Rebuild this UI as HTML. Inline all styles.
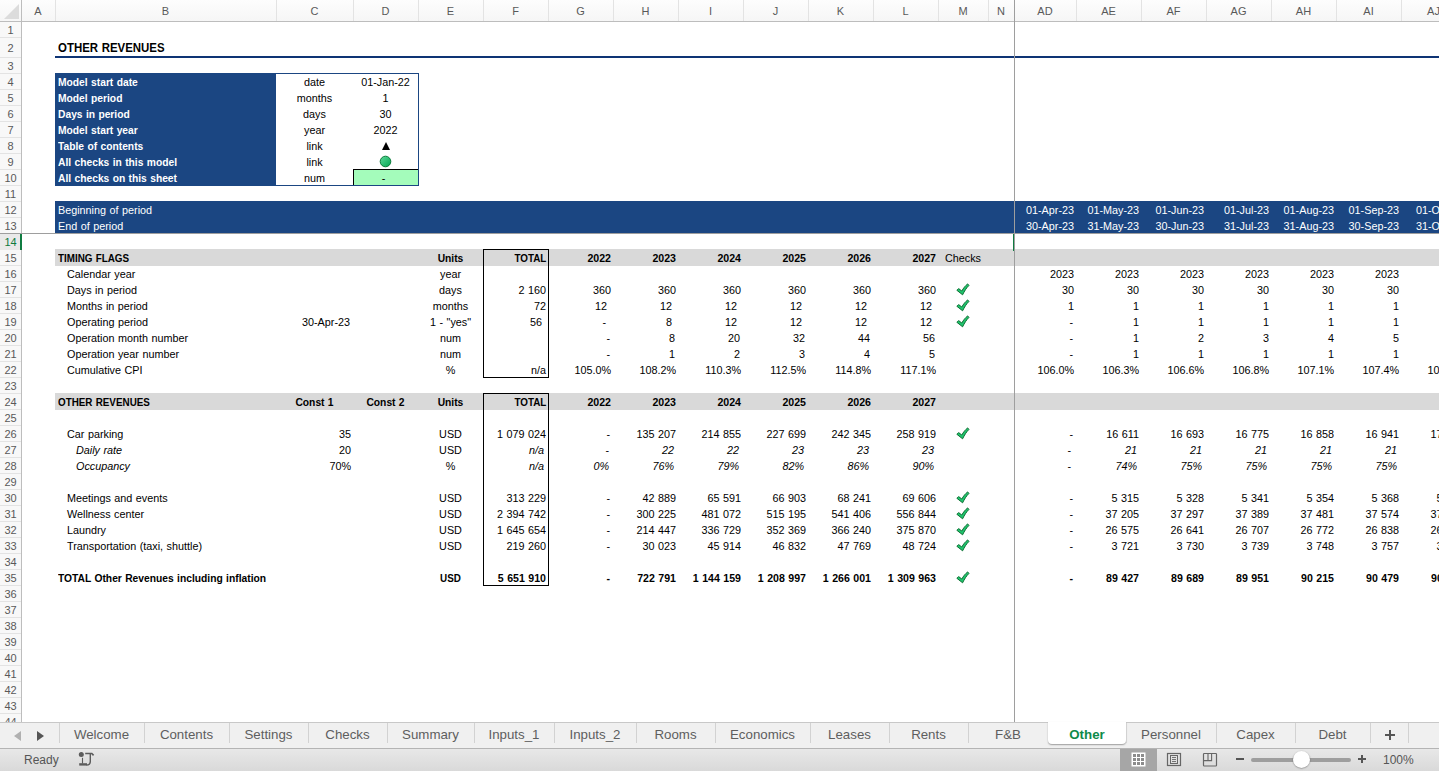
<!DOCTYPE html>
<html><head><meta charset="utf-8"><style>
html,body{margin:0;padding:0;width:1439px;height:771px;overflow:hidden;background:#fff;font-family:"Liberation Sans",sans-serif;}
#sheet{position:absolute;left:0;top:0;width:1439px;height:722px;overflow:hidden;}
.r{position:absolute;box-sizing:border-box;}
svg.r{box-sizing:content-box;}
.t{position:absolute;white-space:pre;word-spacing:0.5px;}
.h{position:absolute;text-align:center;font-size:11px;color:#595959;}
.tab{position:absolute;top:722px;height:25px;line-height:25px;text-align:center;font-size:13.3px;color:#5e5e5e;}
</style></head><body>
<div id="sheet">
<div class="r" style="left:55px;top:56px;width:1384px;height:2px;background:#0e3474;"></div>
<div class="r" style="left:55px;top:73px;width:221px;height:113px;background:#1b4682;"></div>
<div class="r" style="left:276px;top:73px;width:143px;height:113px;border-right:1px solid #1b4682;border-bottom:1px solid #1b4682;border-top:1px solid #1b4682;"></div>
<div class="r" style="left:353px;top:169px;width:65px;height:16px;background:#a4fcbb;border-top:1px solid #000;border-left:1px solid #000;"></div>
<div class="r" style="left:55px;top:201px;width:959px;height:32px;background:#1b4682;"></div>
<div class="r" style="left:1015px;top:201px;width:424px;height:32px;background:#1b4682;"></div>
<div class="r" style="left:55px;top:249px;width:959px;height:17px;background:#d9d9d9;"></div>
<div class="r" style="left:1015px;top:249px;width:424px;height:17px;background:#d9d9d9;"></div>
<div class="r" style="left:55px;top:393px;width:959px;height:17px;background:#d9d9d9;"></div>
<div class="r" style="left:1015px;top:393px;width:424px;height:17px;background:#d9d9d9;"></div>
<div class="r" style="left:483px;top:249px;width:66px;height:129px;border:1px solid #000;"></div>
<div class="r" style="left:483px;top:393px;width:66px;height:193px;border:1px solid #000;"></div>
<div class="t" style="top:75px;height:16px;line-height:15px;font-size:10.6px;color:#fff;font-weight:bold;left:58px;transform:scaleX(0.97);transform-origin:0 50%;">Model start date</div>
<div class="t" style="top:75px;height:16px;line-height:15px;font-size:10.8px;color:#000;left:276px;width:77px;text-align:center;">date</div>
<div class="t" style="top:75px;height:16px;line-height:15px;font-size:10.8px;color:#000;left:353px;width:65px;text-align:center;">01-Jan-22</div>
<div class="t" style="top:91px;height:16px;line-height:15px;font-size:10.6px;color:#fff;font-weight:bold;left:58px;transform:scaleX(0.97);transform-origin:0 50%;">Model period</div>
<div class="t" style="top:91px;height:16px;line-height:15px;font-size:10.8px;color:#000;left:276px;width:77px;text-align:center;">months</div>
<div class="t" style="top:91px;height:16px;line-height:15px;font-size:10.8px;color:#000;left:353px;width:65px;text-align:center;">1</div>
<div class="t" style="top:107px;height:16px;line-height:15px;font-size:10.6px;color:#fff;font-weight:bold;left:58px;transform:scaleX(0.97);transform-origin:0 50%;">Days in period</div>
<div class="t" style="top:107px;height:16px;line-height:15px;font-size:10.8px;color:#000;left:276px;width:77px;text-align:center;">days</div>
<div class="t" style="top:107px;height:16px;line-height:15px;font-size:10.8px;color:#000;left:353px;width:65px;text-align:center;">30</div>
<div class="t" style="top:123px;height:16px;line-height:15px;font-size:10.6px;color:#fff;font-weight:bold;left:58px;transform:scaleX(0.97);transform-origin:0 50%;">Model start year</div>
<div class="t" style="top:123px;height:16px;line-height:15px;font-size:10.8px;color:#000;left:276px;width:77px;text-align:center;">year</div>
<div class="t" style="top:123px;height:16px;line-height:15px;font-size:10.8px;color:#000;left:353px;width:65px;text-align:center;">2022</div>
<div class="t" style="top:139px;height:16px;line-height:15px;font-size:10.6px;color:#fff;font-weight:bold;left:58px;transform:scaleX(0.97);transform-origin:0 50%;">Table of contents</div>
<div class="t" style="top:139px;height:16px;line-height:15px;font-size:10.8px;color:#000;left:276px;width:77px;text-align:center;">link</div>
<div class="t" style="top:155px;height:16px;line-height:15px;font-size:10.6px;color:#fff;font-weight:bold;left:58px;transform:scaleX(0.97);transform-origin:0 50%;">All checks in this model</div>
<div class="t" style="top:155px;height:16px;line-height:15px;font-size:10.8px;color:#000;left:276px;width:77px;text-align:center;">link</div>
<div class="t" style="top:171px;height:16px;line-height:15px;font-size:10.6px;color:#fff;font-weight:bold;left:58px;transform:scaleX(0.97);transform-origin:0 50%;">All checks on this sheet</div>
<div class="t" style="top:171px;height:16px;line-height:15px;font-size:10.8px;color:#000;left:276px;width:77px;text-align:center;">num</div>
<div class="t" style="top:171px;height:16px;line-height:15px;font-size:10.8px;color:#000;left:353px;width:65px;text-align:center;margin-left:-2px;">-</div>
<svg class="r" style="left:381px;top:141px" width="10" height="10"><polygon points="1,9 9,9 5,1" fill="#000"/></svg>
<svg class="r" style="left:379px;top:155px" width="13" height="13"><defs><linearGradient id="gc" x1="0" y1="0" x2="1" y2="1"><stop offset="0" stop-color="#5fd99a"/><stop offset="1" stop-color="#00a651"/></linearGradient></defs><circle cx="6.5" cy="6.5" r="5.3" fill="url(#gc)" stroke="#0b7a3a" stroke-width="1"/></svg>
<div class="t" style="top:39px;height:20px;line-height:19px;font-size:10.8px;color:#000;left:24px;"></div>
<div class="t" style="left:58px;top:39px;height:19px;line-height:19px;font-size:12.5px;font-weight:bold;transform:scaleX(0.915);transform-origin:0 50%;">OTHER REVENUES</div>
<div class="t" style="top:203px;height:16px;line-height:15px;font-size:10.8px;color:#fff;left:58px;">Beginning of period</div>
<div class="t" style="top:219px;height:16px;line-height:15px;font-size:10.8px;color:#fff;left:58px;">End of period</div>
<div class="t" style="top:203px;height:16px;line-height:15px;font-size:10.8px;color:#fff;right:365px;text-align:right;">01-Apr-23</div>
<div class="t" style="top:219px;height:16px;line-height:15px;font-size:10.8px;color:#fff;right:365px;text-align:right;">30-Apr-23</div>
<div class="t" style="top:203px;height:16px;line-height:15px;font-size:10.8px;color:#fff;right:300px;text-align:right;">01-May-23</div>
<div class="t" style="top:219px;height:16px;line-height:15px;font-size:10.8px;color:#fff;right:300px;text-align:right;">31-May-23</div>
<div class="t" style="top:203px;height:16px;line-height:15px;font-size:10.8px;color:#fff;right:235px;text-align:right;">01-Jun-23</div>
<div class="t" style="top:219px;height:16px;line-height:15px;font-size:10.8px;color:#fff;right:235px;text-align:right;">30-Jun-23</div>
<div class="t" style="top:203px;height:16px;line-height:15px;font-size:10.8px;color:#fff;right:170px;text-align:right;">01-Jul-23</div>
<div class="t" style="top:219px;height:16px;line-height:15px;font-size:10.8px;color:#fff;right:170px;text-align:right;">31-Jul-23</div>
<div class="t" style="top:203px;height:16px;line-height:15px;font-size:10.8px;color:#fff;right:105px;text-align:right;">01-Aug-23</div>
<div class="t" style="top:219px;height:16px;line-height:15px;font-size:10.8px;color:#fff;right:105px;text-align:right;">31-Aug-23</div>
<div class="t" style="top:203px;height:16px;line-height:15px;font-size:10.8px;color:#fff;right:40px;text-align:right;">01-Sep-23</div>
<div class="t" style="top:219px;height:16px;line-height:15px;font-size:10.8px;color:#fff;right:40px;text-align:right;">30-Sep-23</div>
<div class="t" style="top:203px;height:16px;line-height:15px;font-size:10.8px;color:#fff;right:-25px;text-align:right;">01-Oct-23</div>
<div class="t" style="top:219px;height:16px;line-height:15px;font-size:10.8px;color:#fff;right:-25px;text-align:right;">31-Oct-23</div>
<div class="t" style="top:251px;height:16px;line-height:15px;font-size:10.6px;color:#000;font-weight:bold;left:58px;transform:scaleX(0.93);transform-origin:0 50%;">TIMING FLAGS</div>
<div class="t" style="top:251px;height:16px;line-height:15px;font-size:10.6px;color:#000;font-weight:bold;left:418px;width:65px;text-align:center;transform:scaleX(0.97);transform-origin:50% 50%;">Units</div>
<div class="t" style="top:251px;height:16px;line-height:15px;font-size:10.6px;color:#000;font-weight:bold;right:893px;text-align:right;transform:scaleX(0.93);transform-origin:100% 50%;">TOTAL</div>
<div class="t" style="top:251px;height:16px;line-height:15px;font-size:10.6px;color:#000;font-weight:bold;right:828px;text-align:right;">2022</div>
<div class="t" style="top:251px;height:16px;line-height:15px;font-size:10.6px;color:#000;font-weight:bold;right:763px;text-align:right;">2023</div>
<div class="t" style="top:251px;height:16px;line-height:15px;font-size:10.6px;color:#000;font-weight:bold;right:698px;text-align:right;">2024</div>
<div class="t" style="top:251px;height:16px;line-height:15px;font-size:10.6px;color:#000;font-weight:bold;right:633px;text-align:right;">2025</div>
<div class="t" style="top:251px;height:16px;line-height:15px;font-size:10.6px;color:#000;font-weight:bold;right:568px;text-align:right;">2026</div>
<div class="t" style="top:251px;height:16px;line-height:15px;font-size:10.6px;color:#000;font-weight:bold;right:503px;text-align:right;">2027</div>
<div class="t" style="top:251px;height:16px;line-height:15px;font-size:10.8px;color:#000;left:938px;width:50px;text-align:center;">Checks</div>
<div class="t" style="top:267px;height:16px;line-height:15px;font-size:10.8px;color:#000;left:67px;">Calendar year</div>
<div class="t" style="top:267px;height:16px;line-height:15px;font-size:10.8px;color:#000;left:418px;width:65px;text-align:center;">year</div>
<div class="t" style="top:267px;height:16px;line-height:15px;font-size:10.8px;color:#000;right:365px;text-align:right;">2023</div>
<div class="t" style="top:267px;height:16px;line-height:15px;font-size:10.8px;color:#000;right:300px;text-align:right;">2023</div>
<div class="t" style="top:267px;height:16px;line-height:15px;font-size:10.8px;color:#000;right:235px;text-align:right;">2023</div>
<div class="t" style="top:267px;height:16px;line-height:15px;font-size:10.8px;color:#000;right:170px;text-align:right;">2023</div>
<div class="t" style="top:267px;height:16px;line-height:15px;font-size:10.8px;color:#000;right:105px;text-align:right;">2023</div>
<div class="t" style="top:267px;height:16px;line-height:15px;font-size:10.8px;color:#000;right:40px;text-align:right;">2023</div>
<div class="t" style="top:267px;height:16px;line-height:15px;font-size:10.8px;color:#000;right:-25px;text-align:right;">2023</div>
<div class="t" style="top:283px;height:16px;line-height:15px;font-size:10.8px;color:#000;left:67px;">Days in period</div>
<div class="t" style="top:283px;height:16px;line-height:15px;font-size:10.8px;color:#000;left:418px;width:65px;text-align:center;">days</div>
<div class="t" style="top:283px;height:16px;line-height:15px;font-size:10.8px;color:#000;right:893px;text-align:right;">2 160</div>
<div class="t" style="top:283px;height:16px;line-height:15px;font-size:10.8px;color:#000;right:828px;text-align:right;">360</div>
<div class="t" style="top:283px;height:16px;line-height:15px;font-size:10.8px;color:#000;right:763px;text-align:right;">360</div>
<div class="t" style="top:283px;height:16px;line-height:15px;font-size:10.8px;color:#000;right:698px;text-align:right;">360</div>
<div class="t" style="top:283px;height:16px;line-height:15px;font-size:10.8px;color:#000;right:633px;text-align:right;">360</div>
<div class="t" style="top:283px;height:16px;line-height:15px;font-size:10.8px;color:#000;right:568px;text-align:right;">360</div>
<div class="t" style="top:283px;height:16px;line-height:15px;font-size:10.8px;color:#000;right:503px;text-align:right;">360</div>
<svg class="r" style="left:956px;top:283px" width="14" height="13" viewBox="0 0 14 13"><path d="M0.9,7.3 L2.6,5.6 L5.8,8.0 C7.4,5.2 9.4,2.6 11.7,0.9 L12.9,2.5 C10.4,4.8 8.4,8.2 6.6,11.8 Z" fill="#20c46e" stroke="#0b6e31" stroke-width="1" stroke-linejoin="round"/></svg>
<div class="t" style="top:283px;height:16px;line-height:15px;font-size:10.8px;color:#000;right:365px;text-align:right;">30</div>
<div class="t" style="top:283px;height:16px;line-height:15px;font-size:10.8px;color:#000;right:300px;text-align:right;">30</div>
<div class="t" style="top:283px;height:16px;line-height:15px;font-size:10.8px;color:#000;right:235px;text-align:right;">30</div>
<div class="t" style="top:283px;height:16px;line-height:15px;font-size:10.8px;color:#000;right:170px;text-align:right;">30</div>
<div class="t" style="top:283px;height:16px;line-height:15px;font-size:10.8px;color:#000;right:105px;text-align:right;">30</div>
<div class="t" style="top:283px;height:16px;line-height:15px;font-size:10.8px;color:#000;right:40px;text-align:right;">30</div>
<div class="t" style="top:283px;height:16px;line-height:15px;font-size:10.8px;color:#000;right:-25px;text-align:right;">30</div>
<div class="t" style="top:299px;height:16px;line-height:15px;font-size:10.8px;color:#000;left:67px;">Months in period</div>
<div class="t" style="top:299px;height:16px;line-height:15px;font-size:10.8px;color:#000;left:418px;width:65px;text-align:center;">months</div>
<div class="t" style="top:299px;height:16px;line-height:15px;font-size:10.8px;color:#000;right:893px;text-align:right;">72</div>
<div class="t" style="top:299px;height:16px;line-height:15px;font-size:10.8px;color:#000;right:832px;text-align:right;">12</div>
<div class="t" style="top:299px;height:16px;line-height:15px;font-size:10.8px;color:#000;right:767px;text-align:right;">12</div>
<div class="t" style="top:299px;height:16px;line-height:15px;font-size:10.8px;color:#000;right:702px;text-align:right;">12</div>
<div class="t" style="top:299px;height:16px;line-height:15px;font-size:10.8px;color:#000;right:637px;text-align:right;">12</div>
<div class="t" style="top:299px;height:16px;line-height:15px;font-size:10.8px;color:#000;right:572px;text-align:right;">12</div>
<div class="t" style="top:299px;height:16px;line-height:15px;font-size:10.8px;color:#000;right:507px;text-align:right;">12</div>
<svg class="r" style="left:956px;top:299px" width="14" height="13" viewBox="0 0 14 13"><path d="M0.9,7.3 L2.6,5.6 L5.8,8.0 C7.4,5.2 9.4,2.6 11.7,0.9 L12.9,2.5 C10.4,4.8 8.4,8.2 6.6,11.8 Z" fill="#20c46e" stroke="#0b6e31" stroke-width="1" stroke-linejoin="round"/></svg>
<div class="t" style="top:299px;height:16px;line-height:15px;font-size:10.8px;color:#000;right:365px;text-align:right;">1</div>
<div class="t" style="top:299px;height:16px;line-height:15px;font-size:10.8px;color:#000;right:300px;text-align:right;">1</div>
<div class="t" style="top:299px;height:16px;line-height:15px;font-size:10.8px;color:#000;right:235px;text-align:right;">1</div>
<div class="t" style="top:299px;height:16px;line-height:15px;font-size:10.8px;color:#000;right:170px;text-align:right;">1</div>
<div class="t" style="top:299px;height:16px;line-height:15px;font-size:10.8px;color:#000;right:105px;text-align:right;">1</div>
<div class="t" style="top:299px;height:16px;line-height:15px;font-size:10.8px;color:#000;right:40px;text-align:right;">1</div>
<div class="t" style="top:299px;height:16px;line-height:15px;font-size:10.8px;color:#000;right:-25px;text-align:right;">1</div>
<div class="t" style="top:315px;height:16px;line-height:15px;font-size:10.8px;color:#000;left:67px;">Operating period</div>
<div class="t" style="top:315px;height:16px;line-height:15px;font-size:10.8px;color:#000;right:1089px;text-align:right;">30-Apr-23</div>
<div class="t" style="top:315px;height:16px;line-height:15px;font-size:10.8px;color:#000;left:418px;width:65px;text-align:center;">1 - &quot;yes&quot;</div>
<div class="t" style="top:315px;height:16px;line-height:15px;font-size:10.8px;color:#000;right:897px;text-align:right;">56</div>
<div class="t" style="top:315px;height:16px;line-height:15px;font-size:10.8px;color:#000;right:833px;text-align:right;">-</div>
<div class="t" style="top:315px;height:16px;line-height:15px;font-size:10.8px;color:#000;right:767px;text-align:right;">8</div>
<div class="t" style="top:315px;height:16px;line-height:15px;font-size:10.8px;color:#000;right:702px;text-align:right;">12</div>
<div class="t" style="top:315px;height:16px;line-height:15px;font-size:10.8px;color:#000;right:637px;text-align:right;">12</div>
<div class="t" style="top:315px;height:16px;line-height:15px;font-size:10.8px;color:#000;right:572px;text-align:right;">12</div>
<div class="t" style="top:315px;height:16px;line-height:15px;font-size:10.8px;color:#000;right:507px;text-align:right;">12</div>
<svg class="r" style="left:956px;top:315px" width="14" height="13" viewBox="0 0 14 13"><path d="M0.9,7.3 L2.6,5.6 L5.8,8.0 C7.4,5.2 9.4,2.6 11.7,0.9 L12.9,2.5 C10.4,4.8 8.4,8.2 6.6,11.8 Z" fill="#20c46e" stroke="#0b6e31" stroke-width="1" stroke-linejoin="round"/></svg>
<div class="t" style="top:315px;height:16px;line-height:15px;font-size:10.8px;color:#000;right:366px;text-align:right;">-</div>
<div class="t" style="top:315px;height:16px;line-height:15px;font-size:10.8px;color:#000;right:300px;text-align:right;">1</div>
<div class="t" style="top:315px;height:16px;line-height:15px;font-size:10.8px;color:#000;right:235px;text-align:right;">1</div>
<div class="t" style="top:315px;height:16px;line-height:15px;font-size:10.8px;color:#000;right:170px;text-align:right;">1</div>
<div class="t" style="top:315px;height:16px;line-height:15px;font-size:10.8px;color:#000;right:105px;text-align:right;">1</div>
<div class="t" style="top:315px;height:16px;line-height:15px;font-size:10.8px;color:#000;right:40px;text-align:right;">1</div>
<div class="t" style="top:315px;height:16px;line-height:15px;font-size:10.8px;color:#000;right:-25px;text-align:right;">1</div>
<div class="t" style="top:331px;height:16px;line-height:15px;font-size:10.8px;color:#000;left:67px;">Operation month number</div>
<div class="t" style="top:331px;height:16px;line-height:15px;font-size:10.8px;color:#000;left:418px;width:65px;text-align:center;">num</div>
<div class="t" style="top:331px;height:16px;line-height:15px;font-size:10.8px;color:#000;right:829px;text-align:right;">-</div>
<div class="t" style="top:331px;height:16px;line-height:15px;font-size:10.8px;color:#000;right:764px;text-align:right;">8</div>
<div class="t" style="top:331px;height:16px;line-height:15px;font-size:10.8px;color:#000;right:699px;text-align:right;">20</div>
<div class="t" style="top:331px;height:16px;line-height:15px;font-size:10.8px;color:#000;right:634px;text-align:right;">32</div>
<div class="t" style="top:331px;height:16px;line-height:15px;font-size:10.8px;color:#000;right:569px;text-align:right;">44</div>
<div class="t" style="top:331px;height:16px;line-height:15px;font-size:10.8px;color:#000;right:504px;text-align:right;">56</div>
<div class="t" style="top:331px;height:16px;line-height:15px;font-size:10.8px;color:#000;right:366px;text-align:right;">-</div>
<div class="t" style="top:331px;height:16px;line-height:15px;font-size:10.8px;color:#000;right:300px;text-align:right;">1</div>
<div class="t" style="top:331px;height:16px;line-height:15px;font-size:10.8px;color:#000;right:235px;text-align:right;">2</div>
<div class="t" style="top:331px;height:16px;line-height:15px;font-size:10.8px;color:#000;right:170px;text-align:right;">3</div>
<div class="t" style="top:331px;height:16px;line-height:15px;font-size:10.8px;color:#000;right:105px;text-align:right;">4</div>
<div class="t" style="top:331px;height:16px;line-height:15px;font-size:10.8px;color:#000;right:40px;text-align:right;">5</div>
<div class="t" style="top:331px;height:16px;line-height:15px;font-size:10.8px;color:#000;right:-25px;text-align:right;">6</div>
<div class="t" style="top:347px;height:16px;line-height:15px;font-size:10.8px;color:#000;left:67px;">Operation year number</div>
<div class="t" style="top:347px;height:16px;line-height:15px;font-size:10.8px;color:#000;left:418px;width:65px;text-align:center;">num</div>
<div class="t" style="top:347px;height:16px;line-height:15px;font-size:10.8px;color:#000;right:829px;text-align:right;">-</div>
<div class="t" style="top:347px;height:16px;line-height:15px;font-size:10.8px;color:#000;right:764px;text-align:right;">1</div>
<div class="t" style="top:347px;height:16px;line-height:15px;font-size:10.8px;color:#000;right:699px;text-align:right;">2</div>
<div class="t" style="top:347px;height:16px;line-height:15px;font-size:10.8px;color:#000;right:634px;text-align:right;">3</div>
<div class="t" style="top:347px;height:16px;line-height:15px;font-size:10.8px;color:#000;right:569px;text-align:right;">4</div>
<div class="t" style="top:347px;height:16px;line-height:15px;font-size:10.8px;color:#000;right:504px;text-align:right;">5</div>
<div class="t" style="top:347px;height:16px;line-height:15px;font-size:10.8px;color:#000;right:366px;text-align:right;">-</div>
<div class="t" style="top:347px;height:16px;line-height:15px;font-size:10.8px;color:#000;right:300px;text-align:right;">1</div>
<div class="t" style="top:347px;height:16px;line-height:15px;font-size:10.8px;color:#000;right:235px;text-align:right;">1</div>
<div class="t" style="top:347px;height:16px;line-height:15px;font-size:10.8px;color:#000;right:170px;text-align:right;">1</div>
<div class="t" style="top:347px;height:16px;line-height:15px;font-size:10.8px;color:#000;right:105px;text-align:right;">1</div>
<div class="t" style="top:347px;height:16px;line-height:15px;font-size:10.8px;color:#000;right:40px;text-align:right;">1</div>
<div class="t" style="top:347px;height:16px;line-height:15px;font-size:10.8px;color:#000;right:-25px;text-align:right;">1</div>
<div class="t" style="top:363px;height:16px;line-height:15px;font-size:10.8px;color:#000;left:67px;">Cumulative CPI</div>
<div class="t" style="top:363px;height:16px;line-height:15px;font-size:10.8px;color:#000;left:418px;width:65px;text-align:center;">%</div>
<div class="t" style="top:363px;height:16px;line-height:15px;font-size:10.8px;color:#000;right:893px;text-align:right;">n/a</div>
<div class="t" style="top:363px;height:16px;line-height:15px;font-size:10.8px;color:#000;right:828px;text-align:right;">105.0%</div>
<div class="t" style="top:363px;height:16px;line-height:15px;font-size:10.8px;color:#000;right:763px;text-align:right;">108.2%</div>
<div class="t" style="top:363px;height:16px;line-height:15px;font-size:10.8px;color:#000;right:698px;text-align:right;">110.3%</div>
<div class="t" style="top:363px;height:16px;line-height:15px;font-size:10.8px;color:#000;right:633px;text-align:right;">112.5%</div>
<div class="t" style="top:363px;height:16px;line-height:15px;font-size:10.8px;color:#000;right:568px;text-align:right;">114.8%</div>
<div class="t" style="top:363px;height:16px;line-height:15px;font-size:10.8px;color:#000;right:503px;text-align:right;">117.1%</div>
<div class="t" style="top:363px;height:16px;line-height:15px;font-size:10.8px;color:#000;right:365px;text-align:right;">106.0%</div>
<div class="t" style="top:363px;height:16px;line-height:15px;font-size:10.8px;color:#000;right:300px;text-align:right;">106.3%</div>
<div class="t" style="top:363px;height:16px;line-height:15px;font-size:10.8px;color:#000;right:235px;text-align:right;">106.6%</div>
<div class="t" style="top:363px;height:16px;line-height:15px;font-size:10.8px;color:#000;right:170px;text-align:right;">106.8%</div>
<div class="t" style="top:363px;height:16px;line-height:15px;font-size:10.8px;color:#000;right:105px;text-align:right;">107.1%</div>
<div class="t" style="top:363px;height:16px;line-height:15px;font-size:10.8px;color:#000;right:40px;text-align:right;">107.4%</div>
<div class="t" style="top:363px;height:16px;line-height:15px;font-size:10.8px;color:#000;right:-25px;text-align:right;">107.7%</div>
<div class="t" style="top:395px;height:16px;line-height:15px;font-size:10.6px;color:#000;font-weight:bold;left:58px;transform:scaleX(0.93);transform-origin:0 50%;">OTHER REVENUES</div>
<div class="t" style="top:395px;height:16px;line-height:15px;font-size:10.6px;color:#000;font-weight:bold;left:276px;width:77px;text-align:center;transform:scaleX(0.97);transform-origin:50% 50%;">Const 1</div>
<div class="t" style="top:395px;height:16px;line-height:15px;font-size:10.6px;color:#000;font-weight:bold;left:353px;width:65px;text-align:center;transform:scaleX(0.97);transform-origin:50% 50%;">Const 2</div>
<div class="t" style="top:395px;height:16px;line-height:15px;font-size:10.6px;color:#000;font-weight:bold;left:418px;width:65px;text-align:center;transform:scaleX(0.97);transform-origin:50% 50%;">Units</div>
<div class="t" style="top:395px;height:16px;line-height:15px;font-size:10.6px;color:#000;font-weight:bold;right:893px;text-align:right;transform:scaleX(0.93);transform-origin:100% 50%;">TOTAL</div>
<div class="t" style="top:395px;height:16px;line-height:15px;font-size:10.6px;color:#000;font-weight:bold;right:828px;text-align:right;">2022</div>
<div class="t" style="top:395px;height:16px;line-height:15px;font-size:10.6px;color:#000;font-weight:bold;right:763px;text-align:right;">2023</div>
<div class="t" style="top:395px;height:16px;line-height:15px;font-size:10.6px;color:#000;font-weight:bold;right:698px;text-align:right;">2024</div>
<div class="t" style="top:395px;height:16px;line-height:15px;font-size:10.6px;color:#000;font-weight:bold;right:633px;text-align:right;">2025</div>
<div class="t" style="top:395px;height:16px;line-height:15px;font-size:10.6px;color:#000;font-weight:bold;right:568px;text-align:right;">2026</div>
<div class="t" style="top:395px;height:16px;line-height:15px;font-size:10.6px;color:#000;font-weight:bold;right:503px;text-align:right;">2027</div>
<div class="t" style="top:427px;height:16px;line-height:15px;font-size:10.8px;color:#000;left:67px;">Car parking</div>
<div class="t" style="top:427px;height:16px;line-height:15px;font-size:10.8px;color:#000;right:1088px;text-align:right;">35</div>
<div class="t" style="top:427px;height:16px;line-height:15px;font-size:10.8px;color:#000;left:418px;width:65px;text-align:center;">USD</div>
<div class="t" style="top:427px;height:16px;line-height:15px;font-size:10.8px;color:#000;right:893px;text-align:right;">1 079 024</div>
<div class="t" style="top:427px;height:16px;line-height:15px;font-size:10.8px;color:#000;right:829px;text-align:right;">-</div>
<div class="t" style="top:427px;height:16px;line-height:15px;font-size:10.8px;color:#000;right:763px;text-align:right;">135 207</div>
<div class="t" style="top:427px;height:16px;line-height:15px;font-size:10.8px;color:#000;right:698px;text-align:right;">214 855</div>
<div class="t" style="top:427px;height:16px;line-height:15px;font-size:10.8px;color:#000;right:633px;text-align:right;">227 699</div>
<div class="t" style="top:427px;height:16px;line-height:15px;font-size:10.8px;color:#000;right:568px;text-align:right;">242 345</div>
<div class="t" style="top:427px;height:16px;line-height:15px;font-size:10.8px;color:#000;right:503px;text-align:right;">258 919</div>
<svg class="r" style="left:956px;top:427px" width="14" height="13" viewBox="0 0 14 13"><path d="M0.9,7.3 L2.6,5.6 L5.8,8.0 C7.4,5.2 9.4,2.6 11.7,0.9 L12.9,2.5 C10.4,4.8 8.4,8.2 6.6,11.8 Z" fill="#20c46e" stroke="#0b6e31" stroke-width="1" stroke-linejoin="round"/></svg>
<div class="t" style="top:427px;height:16px;line-height:15px;font-size:10.8px;color:#000;right:366px;text-align:right;">-</div>
<div class="t" style="top:427px;height:16px;line-height:15px;font-size:10.8px;color:#000;right:300px;text-align:right;">16 611</div>
<div class="t" style="top:427px;height:16px;line-height:15px;font-size:10.8px;color:#000;right:235px;text-align:right;">16 693</div>
<div class="t" style="top:427px;height:16px;line-height:15px;font-size:10.8px;color:#000;right:170px;text-align:right;">16 775</div>
<div class="t" style="top:427px;height:16px;line-height:15px;font-size:10.8px;color:#000;right:105px;text-align:right;">16 858</div>
<div class="t" style="top:427px;height:16px;line-height:15px;font-size:10.8px;color:#000;right:40px;text-align:right;">16 941</div>
<div class="t" style="top:427px;height:16px;line-height:15px;font-size:10.8px;color:#000;right:-25px;text-align:right;">17 024</div>
<div class="t" style="top:443px;height:16px;line-height:15px;font-size:10.8px;color:#000;font-style:italic;left:76px;">Daily rate</div>
<div class="t" style="top:443px;height:16px;line-height:15px;font-size:10.8px;color:#000;right:1088px;text-align:right;">20</div>
<div class="t" style="top:443px;height:16px;line-height:15px;font-size:10.8px;color:#000;left:418px;width:65px;text-align:center;">USD</div>
<div class="t" style="top:443px;height:16px;line-height:15px;font-size:10.8px;color:#000;font-style:italic;right:895px;text-align:right;">n/a</div>
<div class="t" style="top:443px;height:16px;line-height:15px;font-size:10.8px;color:#000;right:830px;text-align:right;">-</div>
<div class="t" style="top:443px;height:16px;line-height:15px;font-size:10.8px;color:#000;font-style:italic;right:765px;text-align:right;">22</div>
<div class="t" style="top:443px;height:16px;line-height:15px;font-size:10.8px;color:#000;font-style:italic;right:700px;text-align:right;">22</div>
<div class="t" style="top:443px;height:16px;line-height:15px;font-size:10.8px;color:#000;font-style:italic;right:635px;text-align:right;">23</div>
<div class="t" style="top:443px;height:16px;line-height:15px;font-size:10.8px;color:#000;font-style:italic;right:570px;text-align:right;">23</div>
<div class="t" style="top:443px;height:16px;line-height:15px;font-size:10.8px;color:#000;font-style:italic;right:505px;text-align:right;">23</div>
<div class="t" style="top:443px;height:16px;line-height:15px;font-size:10.8px;color:#000;right:368px;text-align:right;">-</div>
<div class="t" style="top:443px;height:16px;line-height:15px;font-size:10.8px;color:#000;font-style:italic;right:302px;text-align:right;">21</div>
<div class="t" style="top:443px;height:16px;line-height:15px;font-size:10.8px;color:#000;font-style:italic;right:237px;text-align:right;">21</div>
<div class="t" style="top:443px;height:16px;line-height:15px;font-size:10.8px;color:#000;font-style:italic;right:172px;text-align:right;">21</div>
<div class="t" style="top:443px;height:16px;line-height:15px;font-size:10.8px;color:#000;font-style:italic;right:107px;text-align:right;">21</div>
<div class="t" style="top:443px;height:16px;line-height:15px;font-size:10.8px;color:#000;font-style:italic;right:42px;text-align:right;">21</div>
<div class="t" style="top:443px;height:16px;line-height:15px;font-size:10.8px;color:#000;font-style:italic;right:-23px;text-align:right;">21</div>
<div class="t" style="top:459px;height:16px;line-height:15px;font-size:10.8px;color:#000;font-style:italic;left:76px;">Occupancy</div>
<div class="t" style="top:459px;height:16px;line-height:15px;font-size:10.8px;color:#000;right:1088px;text-align:right;">70%</div>
<div class="t" style="top:459px;height:16px;line-height:15px;font-size:10.8px;color:#000;left:418px;width:65px;text-align:center;">%</div>
<div class="t" style="top:459px;height:16px;line-height:15px;font-size:10.8px;color:#000;font-style:italic;right:895px;text-align:right;">n/a</div>
<div class="t" style="top:459px;height:16px;line-height:15px;font-size:10.8px;color:#000;font-style:italic;right:830px;text-align:right;">0%</div>
<div class="t" style="top:459px;height:16px;line-height:15px;font-size:10.8px;color:#000;font-style:italic;right:765px;text-align:right;">76%</div>
<div class="t" style="top:459px;height:16px;line-height:15px;font-size:10.8px;color:#000;font-style:italic;right:700px;text-align:right;">79%</div>
<div class="t" style="top:459px;height:16px;line-height:15px;font-size:10.8px;color:#000;font-style:italic;right:635px;text-align:right;">82%</div>
<div class="t" style="top:459px;height:16px;line-height:15px;font-size:10.8px;color:#000;font-style:italic;right:570px;text-align:right;">86%</div>
<div class="t" style="top:459px;height:16px;line-height:15px;font-size:10.8px;color:#000;font-style:italic;right:505px;text-align:right;">90%</div>
<div class="t" style="top:459px;height:16px;line-height:15px;font-size:10.8px;color:#000;right:368px;text-align:right;">-</div>
<div class="t" style="top:459px;height:16px;line-height:15px;font-size:10.8px;color:#000;font-style:italic;right:302px;text-align:right;">74%</div>
<div class="t" style="top:459px;height:16px;line-height:15px;font-size:10.8px;color:#000;font-style:italic;right:237px;text-align:right;">75%</div>
<div class="t" style="top:459px;height:16px;line-height:15px;font-size:10.8px;color:#000;font-style:italic;right:172px;text-align:right;">75%</div>
<div class="t" style="top:459px;height:16px;line-height:15px;font-size:10.8px;color:#000;font-style:italic;right:107px;text-align:right;">75%</div>
<div class="t" style="top:459px;height:16px;line-height:15px;font-size:10.8px;color:#000;font-style:italic;right:42px;text-align:right;">75%</div>
<div class="t" style="top:459px;height:16px;line-height:15px;font-size:10.8px;color:#000;font-style:italic;right:-23px;text-align:right;">75%</div>
<div class="t" style="top:491px;height:16px;line-height:15px;font-size:10.8px;color:#000;left:67px;">Meetings and events</div>
<div class="t" style="top:491px;height:16px;line-height:15px;font-size:10.8px;color:#000;left:418px;width:65px;text-align:center;">USD</div>
<div class="t" style="top:491px;height:16px;line-height:15px;font-size:10.8px;color:#000;right:893px;text-align:right;">313 229</div>
<div class="t" style="top:491px;height:16px;line-height:15px;font-size:10.8px;color:#000;right:829px;text-align:right;">-</div>
<div class="t" style="top:491px;height:16px;line-height:15px;font-size:10.8px;color:#000;right:763px;text-align:right;">42 889</div>
<div class="t" style="top:491px;height:16px;line-height:15px;font-size:10.8px;color:#000;right:698px;text-align:right;">65 591</div>
<div class="t" style="top:491px;height:16px;line-height:15px;font-size:10.8px;color:#000;right:633px;text-align:right;">66 903</div>
<div class="t" style="top:491px;height:16px;line-height:15px;font-size:10.8px;color:#000;right:568px;text-align:right;">68 241</div>
<div class="t" style="top:491px;height:16px;line-height:15px;font-size:10.8px;color:#000;right:503px;text-align:right;">69 606</div>
<svg class="r" style="left:956px;top:491px" width="14" height="13" viewBox="0 0 14 13"><path d="M0.9,7.3 L2.6,5.6 L5.8,8.0 C7.4,5.2 9.4,2.6 11.7,0.9 L12.9,2.5 C10.4,4.8 8.4,8.2 6.6,11.8 Z" fill="#20c46e" stroke="#0b6e31" stroke-width="1" stroke-linejoin="round"/></svg>
<div class="t" style="top:491px;height:16px;line-height:15px;font-size:10.8px;color:#000;right:366px;text-align:right;">-</div>
<div class="t" style="top:491px;height:16px;line-height:15px;font-size:10.8px;color:#000;right:300px;text-align:right;">5 315</div>
<div class="t" style="top:491px;height:16px;line-height:15px;font-size:10.8px;color:#000;right:235px;text-align:right;">5 328</div>
<div class="t" style="top:491px;height:16px;line-height:15px;font-size:10.8px;color:#000;right:170px;text-align:right;">5 341</div>
<div class="t" style="top:491px;height:16px;line-height:15px;font-size:10.8px;color:#000;right:105px;text-align:right;">5 354</div>
<div class="t" style="top:491px;height:16px;line-height:15px;font-size:10.8px;color:#000;right:40px;text-align:right;">5 368</div>
<div class="t" style="top:491px;height:16px;line-height:15px;font-size:10.8px;color:#000;right:-25px;text-align:right;">5 381</div>
<div class="t" style="top:507px;height:16px;line-height:15px;font-size:10.8px;color:#000;left:67px;">Wellness center</div>
<div class="t" style="top:507px;height:16px;line-height:15px;font-size:10.8px;color:#000;left:418px;width:65px;text-align:center;">USD</div>
<div class="t" style="top:507px;height:16px;line-height:15px;font-size:10.8px;color:#000;right:893px;text-align:right;">2 394 742</div>
<div class="t" style="top:507px;height:16px;line-height:15px;font-size:10.8px;color:#000;right:829px;text-align:right;">-</div>
<div class="t" style="top:507px;height:16px;line-height:15px;font-size:10.8px;color:#000;right:763px;text-align:right;">300 225</div>
<div class="t" style="top:507px;height:16px;line-height:15px;font-size:10.8px;color:#000;right:698px;text-align:right;">481 072</div>
<div class="t" style="top:507px;height:16px;line-height:15px;font-size:10.8px;color:#000;right:633px;text-align:right;">515 195</div>
<div class="t" style="top:507px;height:16px;line-height:15px;font-size:10.8px;color:#000;right:568px;text-align:right;">541 406</div>
<div class="t" style="top:507px;height:16px;line-height:15px;font-size:10.8px;color:#000;right:503px;text-align:right;">556 844</div>
<svg class="r" style="left:956px;top:507px" width="14" height="13" viewBox="0 0 14 13"><path d="M0.9,7.3 L2.6,5.6 L5.8,8.0 C7.4,5.2 9.4,2.6 11.7,0.9 L12.9,2.5 C10.4,4.8 8.4,8.2 6.6,11.8 Z" fill="#20c46e" stroke="#0b6e31" stroke-width="1" stroke-linejoin="round"/></svg>
<div class="t" style="top:507px;height:16px;line-height:15px;font-size:10.8px;color:#000;right:366px;text-align:right;">-</div>
<div class="t" style="top:507px;height:16px;line-height:15px;font-size:10.8px;color:#000;right:300px;text-align:right;">37 205</div>
<div class="t" style="top:507px;height:16px;line-height:15px;font-size:10.8px;color:#000;right:235px;text-align:right;">37 297</div>
<div class="t" style="top:507px;height:16px;line-height:15px;font-size:10.8px;color:#000;right:170px;text-align:right;">37 389</div>
<div class="t" style="top:507px;height:16px;line-height:15px;font-size:10.8px;color:#000;right:105px;text-align:right;">37 481</div>
<div class="t" style="top:507px;height:16px;line-height:15px;font-size:10.8px;color:#000;right:40px;text-align:right;">37 574</div>
<div class="t" style="top:507px;height:16px;line-height:15px;font-size:10.8px;color:#000;right:-25px;text-align:right;">37 667</div>
<div class="t" style="top:523px;height:16px;line-height:15px;font-size:10.8px;color:#000;left:67px;">Laundry</div>
<div class="t" style="top:523px;height:16px;line-height:15px;font-size:10.8px;color:#000;left:418px;width:65px;text-align:center;">USD</div>
<div class="t" style="top:523px;height:16px;line-height:15px;font-size:10.8px;color:#000;right:893px;text-align:right;">1 645 654</div>
<div class="t" style="top:523px;height:16px;line-height:15px;font-size:10.8px;color:#000;right:829px;text-align:right;">-</div>
<div class="t" style="top:523px;height:16px;line-height:15px;font-size:10.8px;color:#000;right:763px;text-align:right;">214 447</div>
<div class="t" style="top:523px;height:16px;line-height:15px;font-size:10.8px;color:#000;right:698px;text-align:right;">336 729</div>
<div class="t" style="top:523px;height:16px;line-height:15px;font-size:10.8px;color:#000;right:633px;text-align:right;">352 369</div>
<div class="t" style="top:523px;height:16px;line-height:15px;font-size:10.8px;color:#000;right:568px;text-align:right;">366 240</div>
<div class="t" style="top:523px;height:16px;line-height:15px;font-size:10.8px;color:#000;right:503px;text-align:right;">375 870</div>
<svg class="r" style="left:956px;top:523px" width="14" height="13" viewBox="0 0 14 13"><path d="M0.9,7.3 L2.6,5.6 L5.8,8.0 C7.4,5.2 9.4,2.6 11.7,0.9 L12.9,2.5 C10.4,4.8 8.4,8.2 6.6,11.8 Z" fill="#20c46e" stroke="#0b6e31" stroke-width="1" stroke-linejoin="round"/></svg>
<div class="t" style="top:523px;height:16px;line-height:15px;font-size:10.8px;color:#000;right:366px;text-align:right;">-</div>
<div class="t" style="top:523px;height:16px;line-height:15px;font-size:10.8px;color:#000;right:300px;text-align:right;">26 575</div>
<div class="t" style="top:523px;height:16px;line-height:15px;font-size:10.8px;color:#000;right:235px;text-align:right;">26 641</div>
<div class="t" style="top:523px;height:16px;line-height:15px;font-size:10.8px;color:#000;right:170px;text-align:right;">26 707</div>
<div class="t" style="top:523px;height:16px;line-height:15px;font-size:10.8px;color:#000;right:105px;text-align:right;">26 772</div>
<div class="t" style="top:523px;height:16px;line-height:15px;font-size:10.8px;color:#000;right:40px;text-align:right;">26 838</div>
<div class="t" style="top:523px;height:16px;line-height:15px;font-size:10.8px;color:#000;right:-25px;text-align:right;">26 904</div>
<div class="t" style="top:539px;height:16px;line-height:15px;font-size:10.8px;color:#000;left:67px;">Transportation (taxi, shuttle)</div>
<div class="t" style="top:539px;height:16px;line-height:15px;font-size:10.8px;color:#000;left:418px;width:65px;text-align:center;">USD</div>
<div class="t" style="top:539px;height:16px;line-height:15px;font-size:10.8px;color:#000;right:893px;text-align:right;">219 260</div>
<div class="t" style="top:539px;height:16px;line-height:15px;font-size:10.8px;color:#000;right:829px;text-align:right;">-</div>
<div class="t" style="top:539px;height:16px;line-height:15px;font-size:10.8px;color:#000;right:763px;text-align:right;">30 023</div>
<div class="t" style="top:539px;height:16px;line-height:15px;font-size:10.8px;color:#000;right:698px;text-align:right;">45 914</div>
<div class="t" style="top:539px;height:16px;line-height:15px;font-size:10.8px;color:#000;right:633px;text-align:right;">46 832</div>
<div class="t" style="top:539px;height:16px;line-height:15px;font-size:10.8px;color:#000;right:568px;text-align:right;">47 769</div>
<div class="t" style="top:539px;height:16px;line-height:15px;font-size:10.8px;color:#000;right:503px;text-align:right;">48 724</div>
<svg class="r" style="left:956px;top:539px" width="14" height="13" viewBox="0 0 14 13"><path d="M0.9,7.3 L2.6,5.6 L5.8,8.0 C7.4,5.2 9.4,2.6 11.7,0.9 L12.9,2.5 C10.4,4.8 8.4,8.2 6.6,11.8 Z" fill="#20c46e" stroke="#0b6e31" stroke-width="1" stroke-linejoin="round"/></svg>
<div class="t" style="top:539px;height:16px;line-height:15px;font-size:10.8px;color:#000;right:366px;text-align:right;">-</div>
<div class="t" style="top:539px;height:16px;line-height:15px;font-size:10.8px;color:#000;right:300px;text-align:right;">3 721</div>
<div class="t" style="top:539px;height:16px;line-height:15px;font-size:10.8px;color:#000;right:235px;text-align:right;">3 730</div>
<div class="t" style="top:539px;height:16px;line-height:15px;font-size:10.8px;color:#000;right:170px;text-align:right;">3 739</div>
<div class="t" style="top:539px;height:16px;line-height:15px;font-size:10.8px;color:#000;right:105px;text-align:right;">3 748</div>
<div class="t" style="top:539px;height:16px;line-height:15px;font-size:10.8px;color:#000;right:40px;text-align:right;">3 757</div>
<div class="t" style="top:539px;height:16px;line-height:15px;font-size:10.8px;color:#000;right:-25px;text-align:right;">3 766</div>
<div class="t" style="top:571px;height:16px;line-height:15px;font-size:10.6px;color:#000;font-weight:bold;left:58px;transform:scaleX(0.97);transform-origin:0 50%;">TOTAL Other Revenues including inflation</div>
<div class="t" style="top:571px;height:16px;line-height:15px;font-size:10.6px;color:#000;font-weight:bold;left:418px;width:65px;text-align:center;transform:scaleX(0.93);transform-origin:50% 50%;">USD</div>
<div class="t" style="top:571px;height:16px;line-height:15px;font-size:10.6px;color:#000;font-weight:bold;right:893px;text-align:right;">5 651 910</div>
<div class="t" style="top:571px;height:16px;line-height:15px;font-size:10.6px;color:#000;font-weight:bold;right:829px;text-align:right;">-</div>
<div class="t" style="top:571px;height:16px;line-height:15px;font-size:10.6px;color:#000;font-weight:bold;right:763px;text-align:right;">722 791</div>
<div class="t" style="top:571px;height:16px;line-height:15px;font-size:10.6px;color:#000;font-weight:bold;right:698px;text-align:right;">1 144 159</div>
<div class="t" style="top:571px;height:16px;line-height:15px;font-size:10.6px;color:#000;font-weight:bold;right:633px;text-align:right;">1 208 997</div>
<div class="t" style="top:571px;height:16px;line-height:15px;font-size:10.6px;color:#000;font-weight:bold;right:568px;text-align:right;">1 266 001</div>
<div class="t" style="top:571px;height:16px;line-height:15px;font-size:10.6px;color:#000;font-weight:bold;right:503px;text-align:right;">1 309 963</div>
<svg class="r" style="left:956px;top:571px" width="14" height="13" viewBox="0 0 14 13"><path d="M0.9,7.3 L2.6,5.6 L5.8,8.0 C7.4,5.2 9.4,2.6 11.7,0.9 L12.9,2.5 C10.4,4.8 8.4,8.2 6.6,11.8 Z" fill="#20c46e" stroke="#0b6e31" stroke-width="1" stroke-linejoin="round"/></svg>
<div class="t" style="top:571px;height:16px;line-height:15px;font-size:10.6px;color:#000;font-weight:bold;right:366px;text-align:right;">-</div>
<div class="t" style="top:571px;height:16px;line-height:15px;font-size:10.6px;color:#000;font-weight:bold;right:300px;text-align:right;">89 427</div>
<div class="t" style="top:571px;height:16px;line-height:15px;font-size:10.6px;color:#000;font-weight:bold;right:235px;text-align:right;">89 689</div>
<div class="t" style="top:571px;height:16px;line-height:15px;font-size:10.6px;color:#000;font-weight:bold;right:170px;text-align:right;">89 951</div>
<div class="t" style="top:571px;height:16px;line-height:15px;font-size:10.6px;color:#000;font-weight:bold;right:105px;text-align:right;">90 215</div>
<div class="t" style="top:571px;height:16px;line-height:15px;font-size:10.6px;color:#000;font-weight:bold;right:40px;text-align:right;">90 479</div>
<div class="t" style="top:571px;height:16px;line-height:15px;font-size:10.6px;color:#000;font-weight:bold;right:-25px;text-align:right;">90 744</div>
<div class="r" style="left:0;top:0;width:1439px;height:21px;background:linear-gradient(#fdfdfd,#f6f6f6);"></div>
<div class="r" style="left:0;top:21px;width:1439px;height:1px;background:#bdbdbd;"></div>
<svg class="r" style="left:0;top:0" width="21" height="21"><polygon points="4,19 19,19 19,4" fill="#dcdcdc"/></svg>
<div class="r" style="left:55px;top:0;width:1px;height:21px;background:#e3e3e3;"></div>
<div class="h" style="left:21px;width:34px;top:0;height:21px;line-height:22px;">A</div>
<div class="r" style="left:276px;top:0;width:1px;height:21px;background:#e3e3e3;"></div>
<div class="h" style="left:55px;width:221px;top:0;height:21px;line-height:22px;">B</div>
<div class="r" style="left:353px;top:0;width:1px;height:21px;background:#e3e3e3;"></div>
<div class="h" style="left:276px;width:77px;top:0;height:21px;line-height:22px;">C</div>
<div class="r" style="left:418px;top:0;width:1px;height:21px;background:#e3e3e3;"></div>
<div class="h" style="left:353px;width:65px;top:0;height:21px;line-height:22px;">D</div>
<div class="r" style="left:483px;top:0;width:1px;height:21px;background:#e3e3e3;"></div>
<div class="h" style="left:418px;width:65px;top:0;height:21px;line-height:22px;">E</div>
<div class="r" style="left:548px;top:0;width:1px;height:21px;background:#e3e3e3;"></div>
<div class="h" style="left:483px;width:65px;top:0;height:21px;line-height:22px;">F</div>
<div class="r" style="left:613px;top:0;width:1px;height:21px;background:#e3e3e3;"></div>
<div class="h" style="left:548px;width:65px;top:0;height:21px;line-height:22px;">G</div>
<div class="r" style="left:678px;top:0;width:1px;height:21px;background:#e3e3e3;"></div>
<div class="h" style="left:613px;width:65px;top:0;height:21px;line-height:22px;">H</div>
<div class="r" style="left:743px;top:0;width:1px;height:21px;background:#e3e3e3;"></div>
<div class="h" style="left:678px;width:65px;top:0;height:21px;line-height:22px;">I</div>
<div class="r" style="left:808px;top:0;width:1px;height:21px;background:#e3e3e3;"></div>
<div class="h" style="left:743px;width:65px;top:0;height:21px;line-height:22px;">J</div>
<div class="r" style="left:873px;top:0;width:1px;height:21px;background:#e3e3e3;"></div>
<div class="h" style="left:808px;width:65px;top:0;height:21px;line-height:22px;">K</div>
<div class="r" style="left:938px;top:0;width:1px;height:21px;background:#e3e3e3;"></div>
<div class="h" style="left:873px;width:65px;top:0;height:21px;line-height:22px;">L</div>
<div class="r" style="left:988px;top:0;width:1px;height:21px;background:#e3e3e3;"></div>
<div class="h" style="left:938px;width:50px;top:0;height:21px;line-height:22px;">M</div>
<div class="r" style="left:1014px;top:0;width:1px;height:21px;background:#e3e3e3;"></div>
<div class="h" style="left:988px;width:26px;top:0;height:21px;line-height:22px;">N</div>
<div class="r" style="left:1076px;top:0;width:1px;height:21px;background:#e3e3e3;"></div>
<div class="h" style="left:1014px;width:62px;top:0;height:21px;line-height:22px;">AD</div>
<div class="r" style="left:1141px;top:0;width:1px;height:21px;background:#e3e3e3;"></div>
<div class="h" style="left:1076px;width:65px;top:0;height:21px;line-height:22px;">AE</div>
<div class="r" style="left:1206px;top:0;width:1px;height:21px;background:#e3e3e3;"></div>
<div class="h" style="left:1141px;width:65px;top:0;height:21px;line-height:22px;">AF</div>
<div class="r" style="left:1271px;top:0;width:1px;height:21px;background:#e3e3e3;"></div>
<div class="h" style="left:1206px;width:65px;top:0;height:21px;line-height:22px;">AG</div>
<div class="r" style="left:1336px;top:0;width:1px;height:21px;background:#e3e3e3;"></div>
<div class="h" style="left:1271px;width:65px;top:0;height:21px;line-height:22px;">AH</div>
<div class="r" style="left:1401px;top:0;width:1px;height:21px;background:#e3e3e3;"></div>
<div class="h" style="left:1336px;width:65px;top:0;height:21px;line-height:22px;">AI</div>
<div class="r" style="left:1466px;top:0;width:1px;height:21px;background:#e3e3e3;"></div>
<div class="h" style="left:1401px;width:65px;top:0;height:21px;line-height:22px;">AJ</div>
<div class="r" style="left:0;top:22px;width:21px;height:700px;background:#f8f8f8;"></div>
<div class="r" style="left:21px;top:0;width:1px;height:722px;background:#bdbdbd;"></div>
<div class="r" style="left:0;top:37px;width:21px;height:1px;background:#e3e3e3;"></div>
<div class="h" style="left:0;width:21px;top:22px;height:16px;line-height:16px;color:#595959;">1</div>
<div class="r" style="left:0;top:57px;width:21px;height:1px;background:#e3e3e3;"></div>
<div class="h" style="left:0;width:21px;top:38px;height:20px;line-height:20px;color:#595959;">2</div>
<div class="r" style="left:0;top:73px;width:21px;height:1px;background:#e3e3e3;"></div>
<div class="h" style="left:0;width:21px;top:58px;height:16px;line-height:16px;color:#595959;">3</div>
<div class="r" style="left:0;top:89px;width:21px;height:1px;background:#e3e3e3;"></div>
<div class="h" style="left:0;width:21px;top:74px;height:16px;line-height:16px;color:#595959;">4</div>
<div class="r" style="left:0;top:105px;width:21px;height:1px;background:#e3e3e3;"></div>
<div class="h" style="left:0;width:21px;top:90px;height:16px;line-height:16px;color:#595959;">5</div>
<div class="r" style="left:0;top:121px;width:21px;height:1px;background:#e3e3e3;"></div>
<div class="h" style="left:0;width:21px;top:106px;height:16px;line-height:16px;color:#595959;">6</div>
<div class="r" style="left:0;top:137px;width:21px;height:1px;background:#e3e3e3;"></div>
<div class="h" style="left:0;width:21px;top:122px;height:16px;line-height:16px;color:#595959;">7</div>
<div class="r" style="left:0;top:153px;width:21px;height:1px;background:#e3e3e3;"></div>
<div class="h" style="left:0;width:21px;top:138px;height:16px;line-height:16px;color:#595959;">8</div>
<div class="r" style="left:0;top:169px;width:21px;height:1px;background:#e3e3e3;"></div>
<div class="h" style="left:0;width:21px;top:154px;height:16px;line-height:16px;color:#595959;">9</div>
<div class="r" style="left:0;top:185px;width:21px;height:1px;background:#e3e3e3;"></div>
<div class="h" style="left:0;width:21px;top:170px;height:16px;line-height:16px;color:#595959;">10</div>
<div class="r" style="left:0;top:201px;width:21px;height:1px;background:#e3e3e3;"></div>
<div class="h" style="left:0;width:21px;top:186px;height:16px;line-height:16px;color:#595959;">11</div>
<div class="r" style="left:0;top:217px;width:21px;height:1px;background:#e3e3e3;"></div>
<div class="h" style="left:0;width:21px;top:202px;height:16px;line-height:16px;color:#595959;">12</div>
<div class="r" style="left:0;top:233px;width:21px;height:1px;background:#e3e3e3;"></div>
<div class="h" style="left:0;width:21px;top:218px;height:16px;line-height:16px;color:#595959;">13</div>
<div class="r" style="left:0;top:249px;width:21px;height:1px;background:#e3e3e3;"></div>
<div class="h" style="left:0;width:21px;top:234px;height:16px;line-height:16px;color:#0e7a3e;background:#e9e9e9;">14</div>
<div class="r" style="left:0;top:265px;width:21px;height:1px;background:#e3e3e3;"></div>
<div class="h" style="left:0;width:21px;top:250px;height:16px;line-height:16px;color:#595959;">15</div>
<div class="r" style="left:0;top:281px;width:21px;height:1px;background:#e3e3e3;"></div>
<div class="h" style="left:0;width:21px;top:266px;height:16px;line-height:16px;color:#595959;">16</div>
<div class="r" style="left:0;top:297px;width:21px;height:1px;background:#e3e3e3;"></div>
<div class="h" style="left:0;width:21px;top:282px;height:16px;line-height:16px;color:#595959;">17</div>
<div class="r" style="left:0;top:313px;width:21px;height:1px;background:#e3e3e3;"></div>
<div class="h" style="left:0;width:21px;top:298px;height:16px;line-height:16px;color:#595959;">18</div>
<div class="r" style="left:0;top:329px;width:21px;height:1px;background:#e3e3e3;"></div>
<div class="h" style="left:0;width:21px;top:314px;height:16px;line-height:16px;color:#595959;">19</div>
<div class="r" style="left:0;top:345px;width:21px;height:1px;background:#e3e3e3;"></div>
<div class="h" style="left:0;width:21px;top:330px;height:16px;line-height:16px;color:#595959;">20</div>
<div class="r" style="left:0;top:361px;width:21px;height:1px;background:#e3e3e3;"></div>
<div class="h" style="left:0;width:21px;top:346px;height:16px;line-height:16px;color:#595959;">21</div>
<div class="r" style="left:0;top:377px;width:21px;height:1px;background:#e3e3e3;"></div>
<div class="h" style="left:0;width:21px;top:362px;height:16px;line-height:16px;color:#595959;">22</div>
<div class="r" style="left:0;top:393px;width:21px;height:1px;background:#e3e3e3;"></div>
<div class="h" style="left:0;width:21px;top:378px;height:16px;line-height:16px;color:#595959;">23</div>
<div class="r" style="left:0;top:409px;width:21px;height:1px;background:#e3e3e3;"></div>
<div class="h" style="left:0;width:21px;top:394px;height:16px;line-height:16px;color:#595959;">24</div>
<div class="r" style="left:0;top:425px;width:21px;height:1px;background:#e3e3e3;"></div>
<div class="h" style="left:0;width:21px;top:410px;height:16px;line-height:16px;color:#595959;">25</div>
<div class="r" style="left:0;top:441px;width:21px;height:1px;background:#e3e3e3;"></div>
<div class="h" style="left:0;width:21px;top:426px;height:16px;line-height:16px;color:#595959;">26</div>
<div class="r" style="left:0;top:457px;width:21px;height:1px;background:#e3e3e3;"></div>
<div class="h" style="left:0;width:21px;top:442px;height:16px;line-height:16px;color:#595959;">27</div>
<div class="r" style="left:0;top:473px;width:21px;height:1px;background:#e3e3e3;"></div>
<div class="h" style="left:0;width:21px;top:458px;height:16px;line-height:16px;color:#595959;">28</div>
<div class="r" style="left:0;top:489px;width:21px;height:1px;background:#e3e3e3;"></div>
<div class="h" style="left:0;width:21px;top:474px;height:16px;line-height:16px;color:#595959;">29</div>
<div class="r" style="left:0;top:505px;width:21px;height:1px;background:#e3e3e3;"></div>
<div class="h" style="left:0;width:21px;top:490px;height:16px;line-height:16px;color:#595959;">30</div>
<div class="r" style="left:0;top:521px;width:21px;height:1px;background:#e3e3e3;"></div>
<div class="h" style="left:0;width:21px;top:506px;height:16px;line-height:16px;color:#595959;">31</div>
<div class="r" style="left:0;top:537px;width:21px;height:1px;background:#e3e3e3;"></div>
<div class="h" style="left:0;width:21px;top:522px;height:16px;line-height:16px;color:#595959;">32</div>
<div class="r" style="left:0;top:553px;width:21px;height:1px;background:#e3e3e3;"></div>
<div class="h" style="left:0;width:21px;top:538px;height:16px;line-height:16px;color:#595959;">33</div>
<div class="r" style="left:0;top:569px;width:21px;height:1px;background:#e3e3e3;"></div>
<div class="h" style="left:0;width:21px;top:554px;height:16px;line-height:16px;color:#595959;">34</div>
<div class="r" style="left:0;top:585px;width:21px;height:1px;background:#e3e3e3;"></div>
<div class="h" style="left:0;width:21px;top:570px;height:16px;line-height:16px;color:#595959;">35</div>
<div class="r" style="left:0;top:601px;width:21px;height:1px;background:#e3e3e3;"></div>
<div class="h" style="left:0;width:21px;top:586px;height:16px;line-height:16px;color:#595959;">36</div>
<div class="r" style="left:0;top:617px;width:21px;height:1px;background:#e3e3e3;"></div>
<div class="h" style="left:0;width:21px;top:602px;height:16px;line-height:16px;color:#595959;">37</div>
<div class="r" style="left:0;top:633px;width:21px;height:1px;background:#e3e3e3;"></div>
<div class="h" style="left:0;width:21px;top:618px;height:16px;line-height:16px;color:#595959;">38</div>
<div class="r" style="left:0;top:649px;width:21px;height:1px;background:#e3e3e3;"></div>
<div class="h" style="left:0;width:21px;top:634px;height:16px;line-height:16px;color:#595959;">39</div>
<div class="r" style="left:0;top:665px;width:21px;height:1px;background:#e3e3e3;"></div>
<div class="h" style="left:0;width:21px;top:650px;height:16px;line-height:16px;color:#595959;">40</div>
<div class="r" style="left:0;top:681px;width:21px;height:1px;background:#e3e3e3;"></div>
<div class="h" style="left:0;width:21px;top:666px;height:16px;line-height:16px;color:#595959;">41</div>
<div class="r" style="left:0;top:697px;width:21px;height:1px;background:#e3e3e3;"></div>
<div class="h" style="left:0;width:21px;top:682px;height:16px;line-height:16px;color:#595959;">42</div>
<div class="r" style="left:0;top:713px;width:21px;height:1px;background:#e3e3e3;"></div>
<div class="h" style="left:0;width:21px;top:698px;height:16px;line-height:16px;color:#595959;">43</div>
<div class="r" style="left:0;top:729px;width:21px;height:1px;background:#e3e3e3;"></div>
<div class="h" style="left:0;width:21px;top:714px;height:16px;line-height:16px;color:#595959;">44</div>
<div class="r" style="left:20px;top:234px;width:2px;height:16px;background:#107c41;"></div>
<div class="r" style="left:1013px;top:234px;width:1px;height:17px;background:#107c41;"></div>
<div class="r" style="left:1014px;top:0;width:1px;height:722px;background:#9e9e9e;"></div>
<div class="r" style="left:0;top:233px;width:1439px;height:1px;background:#9e9e9e;"></div>
</div>
<div class="r" style="left:0;top:722px;width:1439px;height:26px;background:#f0f0f0;"></div>
<div class="r" style="left:0;top:722px;width:1439px;height:1px;background:#c8c8c8;"></div>
<div class="r" style="left:0;top:748px;width:1439px;height:1px;background:#b4b4b4;"></div>
<svg class="r" style="left:0;top:722px" width="50" height="26"><polygon points="21,9 21,19 14,14" fill="#b0b0b0"/><polygon points="37,9 37,19 44,14" fill="#555"/></svg>
<div class="r" style="left:59px;top:723px;width:1px;height:20px;background:#d2d2d2;"></div>
<div class="tab" style="left:59px;width:85px;">Welcome</div>
<div class="r" style="left:144px;top:723px;width:1px;height:20px;background:#d2d2d2;"></div>
<div class="tab" style="left:144px;width:85px;">Contents</div>
<div class="r" style="left:229px;top:723px;width:1px;height:20px;background:#d2d2d2;"></div>
<div class="tab" style="left:229px;width:79px;">Settings</div>
<div class="r" style="left:308px;top:723px;width:1px;height:20px;background:#d2d2d2;"></div>
<div class="tab" style="left:308px;width:79px;">Checks</div>
<div class="r" style="left:387px;top:723px;width:1px;height:20px;background:#d2d2d2;"></div>
<div class="tab" style="left:387px;width:87px;">Summary</div>
<div class="r" style="left:474px;top:723px;width:1px;height:20px;background:#d2d2d2;"></div>
<div class="tab" style="left:474px;width:80px;">Inputs_1</div>
<div class="r" style="left:554px;top:723px;width:1px;height:20px;background:#d2d2d2;"></div>
<div class="tab" style="left:554px;width:82px;">Inputs_2</div>
<div class="r" style="left:636px;top:723px;width:1px;height:20px;background:#d2d2d2;"></div>
<div class="tab" style="left:636px;width:79px;">Rooms</div>
<div class="r" style="left:715px;top:723px;width:1px;height:20px;background:#d2d2d2;"></div>
<div class="tab" style="left:715px;width:95px;">Economics</div>
<div class="r" style="left:810px;top:723px;width:1px;height:20px;background:#d2d2d2;"></div>
<div class="tab" style="left:810px;width:79px;">Leases</div>
<div class="r" style="left:889px;top:723px;width:1px;height:20px;background:#d2d2d2;"></div>
<div class="tab" style="left:889px;width:79px;">Rents</div>
<div class="r" style="left:968px;top:723px;width:1px;height:20px;background:#d2d2d2;"></div>
<div class="tab" style="left:968px;width:80px;">F&amp;B</div>
<div class="r" style="left:1048px;top:722px;width:78px;height:22px;background:#fff;border-radius:0 0 4px 4px;box-shadow:0 1px 1.5px rgba(0,0,0,0.35);"></div>
<div class="tab" style="left:1048px;width:78px;color:#0f8a4a;font-weight:bold;">Other</div>
<div class="r" style="left:1126px;top:723px;width:1px;height:20px;background:#d2d2d2;"></div>
<div class="tab" style="left:1126px;width:90px;">Personnel</div>
<div class="r" style="left:1216px;top:723px;width:1px;height:20px;background:#d2d2d2;"></div>
<div class="tab" style="left:1216px;width:79px;">Capex</div>
<div class="r" style="left:1295px;top:723px;width:1px;height:20px;background:#d2d2d2;"></div>
<div class="tab" style="left:1295px;width:75px;">Debt</div>
<div class="r" style="left:1370px;top:723px;width:1px;height:20px;background:#d2d2d2;"></div>
<div class="r" style="left:1385px;top:734px;width:10px;height:2px;background:#555;"></div>
<div class="r" style="left:1389px;top:730px;width:2px;height:10px;background:#555;"></div>
<div class="r" style="left:1408px;top:723px;width:1px;height:20px;background:#d2d2d2;"></div>
<div class="r" style="left:0;top:749px;width:1439px;height:22px;background:linear-gradient(#e8e8e8,#d9d9d9);"></div>
<div class="t" style="left:24px;top:750px;height:20px;line-height:20px;font-size:12px;color:#555;">Ready</div>
<svg class="r" style="left:70px;top:748px" width="30" height="23" viewBox="0 0 30 23"><circle cx="11.3" cy="6.4" r="2.5" fill="#5c5c5c"/><path d="M12.5,9.8 V15.5" stroke="#5c5c5c" stroke-width="1.1" fill="none"/><path d="M9.2,16.4 H17" stroke="#5c5c5c" stroke-width="2.4" fill="none"/><path d="M16.5,17 Q20.3,17 20.3,13.6 V5.6" stroke="#5c5c5c" stroke-width="1.4" fill="none"/><path d="M15.2,5.5 H21.8 L23.6,7.3" stroke="#5c5c5c" stroke-width="1.7" fill="none"/></svg>
<div class="r" style="left:1120px;top:749px;width:37px;height:22px;background:#a6a6a6;"></div>
<svg class="r" style="left:1131px;top:752px" width="15" height="15" viewBox="0 0 15 15"><rect x="0.5" y="0.5" width="14" height="14" fill="#fff"/><g fill="#8c8c8c"><rect x="2" y="2" width="3" height="3"/><rect x="6" y="2" width="3" height="3"/><rect x="10" y="2" width="3" height="3"/><rect x="2" y="6" width="3" height="3"/><rect x="6" y="6" width="3" height="3"/><rect x="10" y="6" width="3" height="3"/><rect x="2" y="10" width="3" height="3"/><rect x="6" y="10" width="3" height="3"/><rect x="10" y="10" width="3" height="3"/></g></svg>
<svg class="r" style="left:1166px;top:752px" width="16" height="15" viewBox="0 0 16 15"><rect x="1.5" y="1.5" width="13" height="12" fill="none" stroke="#666" stroke-width="1.2"/><rect x="4.5" y="3.5" width="7" height="8" fill="none" stroke="#666" stroke-width="1"/><path d="M6,5.5 H10 M6,7.5 H10 M6,9.5 H10" stroke="#666" stroke-width="0.9"/></svg>
<svg class="r" style="left:1202px;top:752px" width="16" height="15" viewBox="0 0 16 15"><rect x="1.5" y="1.5" width="13" height="12.5" rx="0.8" fill="none" stroke="#666" stroke-width="1.2"/><path d="M1.5,8.6 H9.6 V1.5 M6,1.5 V8.6" stroke="#666" stroke-width="1.1" fill="none"/></svg>
<div class="r" style="left:1236px;top:758px;width:8px;height:2px;background:#555;"></div>
<div class="r" style="left:1251px;top:758px;width:100px;height:4px;border-radius:2px;background:#9e9e9e;"></div>
<div class="r" style="left:1293px;top:751px;width:17px;height:17px;border-radius:50%;background:#fff;box-shadow:0 0.5px 1.5px rgba(0,0,0,0.45);"></div>
<div class="r" style="left:1358px;top:758px;width:8px;height:2px;background:#555;"></div>
<div class="r" style="left:1361px;top:755px;width:2px;height:8px;background:#555;"></div>
<div class="t" style="left:1383px;top:750px;height:20px;line-height:20px;font-size:12px;color:#555;">100%</div>
</body></html>
